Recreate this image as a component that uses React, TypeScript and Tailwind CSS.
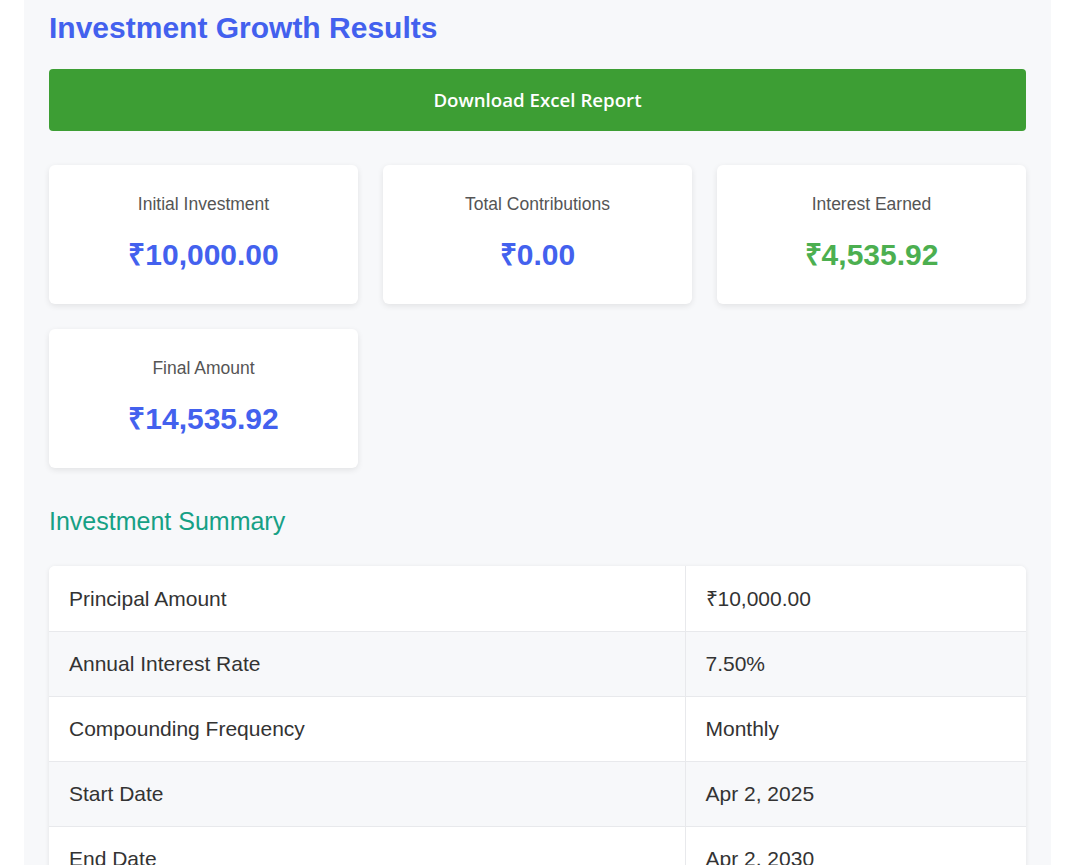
const cards = [
  { label: "Initial Investment", value: "₹10,000.00", green: false },
  { label: "Total Contributions", value: "₹0.00", green: false },
  { label: "Interest Earned", value: "₹4,535.92", green: true },
  { label: "Final Amount", value: "₹14,535.92", green: false },
]

const rows = [
  ["Principal Amount", "₹10,000.00"],
  ["Annual Interest Rate", "7.50%"],
  ["Compounding Frequency", "Monthly"],
  ["Start Date", "Apr 2, 2025"],
  ["End Date", "Apr 2, 2030"],
]

export default function App() {
  return (
    <div className="h-screen overflow-hidden bg-white font-['Liberation_Sans',Arial,sans-serif]">
      <div className="ml-[24px] mr-[14px] bg-[#f7f8fa] px-[25px] pt-[9px] pb-10">
        <h2 className="text-[30px] font-bold text-[#4361ee] leading-[38px]">Investment Growth Results</h2>

        <button className="mt-[22px] w-full h-[62px] rounded-[4px] bg-[#3d9e34] text-white text-[18.7px] font-semibold font-['Open_Sans',sans-serif]">
          Download Excel Report
        </button>

        <div className="mt-[34px] grid grid-cols-3 gap-[25px]">
          {cards.map((c) => (
            <div
              key={c.label}
              className="h-[139px] rounded-[6px] bg-white shadow-[0_2px_6px_rgba(0,0,0,0.09)] flex flex-col items-center pt-[28px]"
            >
              <div className="text-[17.5px] text-[#555] leading-[22px]">{c.label}</div>
              <div
                className={
                  "mt-[22px] text-[30px] font-bold leading-[36px] " + (c.green ? "text-[#4caf50]" : "text-[#4361ee]")
                }
              >
                {c.value}
              </div>
            </div>
          ))}
        </div>

        <h3 className="mt-[37px] text-[25px] text-[#16a085] leading-[32px]">Investment Summary</h3>

        <div className="mt-[29px] rounded-[6px] bg-white shadow-[0_1px_5px_rgba(0,0,0,0.09)] overflow-hidden">
          <table className="w-full border-collapse text-[21px] text-[#333]">
            <tbody>
              {rows.map(([k, v], i) => (
                <tr key={k} className={(i % 2 === 1 ? "bg-[#f7f8fa] " : "bg-white ") + "h-[65px] border-b border-[#e8e9ec] last:border-b-0"}>
                  <td className="w-[636px] pl-[20px] border-r border-[#e8e9ec]">{k}</td>
                  <td className="pl-[20px]">{v}</td>
                </tr>
              ))}
            </tbody>
          </table>
        </div>
      </div>
    </div>
  )
}
